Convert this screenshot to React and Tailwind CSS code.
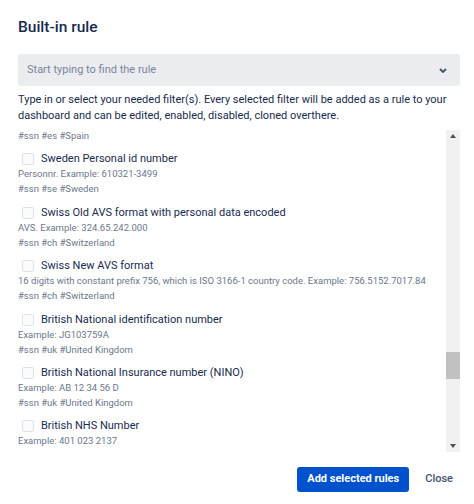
import { useLayoutEffect, useRef } from 'react'

const rules = [
  {
    title: 'Sweden Personal id number',
    desc: 'Personnr. Example: 610321-3499',
    tags: '#ssn #se #Sweden',
  },
  {
    title: 'Swiss Old AVS format with personal data encoded',
    desc: 'AVS. Example: 324.65.242.000',
    tags: '#ssn #ch #Switzerland',
  },
  {
    title: 'Swiss New AVS format',
    desc: '16 digits with constant prefix 756, which is ISO 3166-1 country code. Example: 756.5152.7017.84',
    tags: '#ssn #ch #Switzerland',
  },
  {
    title: 'British National identification number',
    desc: 'Example: JG103759A',
    tags: '#ssn #uk #United Kingdom',
  },
  {
    title: 'British National Insurance number (NINO)',
    desc: 'Example: AB 12 34 56 D',
    tags: '#ssn #uk #United Kingdom',
  },
  {
    title: 'British NHS Number',
    desc: 'Example: 401 023 2137',
    tags: '#ssn #uk #United Kingdom',
  },
]

function RuleItem({ rule }) {
  return (
    <div className="flex flex-col">
      <label className="flex items-center h-[16px] pt-[2px] pl-1">
        <span className="w-[12px] h-[12px] rounded-[2px] border border-[#dfe1e6] bg-[#fafbfc] shrink-0" />
        <span className="ml-[7px] text-[11px] leading-[14px] text-[#172b4d]">{rule.title}</span>
      </label>
      <div className="text-[9.5px] leading-[15px] text-[#6b778c] whitespace-nowrap">{rule.desc}</div>
      <div className="text-[9.5px] leading-[15px] text-[#6b778c]">{rule.tags}</div>
    </div>
  )
}

function Scrollbar() {
  return (
    <div className="w-[14px] bg-[#f1f1f1] flex flex-col items-center shrink-0">
      <div className="h-[12px] flex items-center justify-center">
        <svg width="6" height="4" viewBox="0 0 6 4"><path d="M0 4 L3 0 L6 4 Z" fill="#505050" /></svg>
      </div>
      <div className="h-[210px]" />
      <div className="w-full h-[27px] bg-[#c1c1c1]" />
      <div className="flex-1" />
      <div className="h-[12px] flex items-center justify-center">
        <svg width="6" height="4" viewBox="0 0 6 4"><path d="M0 0 L6 0 L3 4 Z" fill="#505050" /></svg>
      </div>
    </div>
  )
}

export default function App() {
  const listRef = useRef(null)

  // list is scrolled part-way: the tail of the Spain entry peeks in at the top
  useLayoutEffect(() => {
    if (listRef.current) listRef.current.scrollTop = 5
  }, [])

  return (
    <div className="w-[474px] h-[504px] bg-white pl-[18px] pr-[14px] pt-[17px] font-['Roboto',sans-serif] text-[#172b4d]">
      <h1 className="text-[15.5px] leading-[20px] font-medium">Built-in rule</h1>

      <div className="mt-[17px] h-[32px] bg-[#ebecf0] rounded-[3px] flex items-center justify-between pl-[9px] pr-[13px]">
        <span className="text-[11px] text-[#7a869a]">Start typing to find the rule</span>
        <svg width="8" height="5" viewBox="0 0 8 5">
          <path d="M1 1 L4 4 L7 1" stroke="#42526e" strokeWidth="1.8" fill="none" />
        </svg>
      </div>

      <p className="mt-[6px] text-[11px] leading-[16px] pr-[4px]">
        Type in or select your needed filter(s). Every selected filter will be added as a rule to your dashboard and can be edited, enabled, disabled, cloned overthere.
      </p>

      <div className="mt-[6px] h-[322px] flex">
        <div ref={listRef} className="flex-1 overflow-hidden flex flex-col gap-[7.4px]">
          <div className="pt-[3px] text-[9.5px] leading-[15px] text-[#6b778c]">#ssn #es #Spain</div>
          {rules.map((r) => (
            <RuleItem key={r.title} rule={r} />
          ))}
        </div>
        <Scrollbar />
      </div>

      <div className="mt-[15px] flex items-center justify-end gap-[16px] pr-[7px]">
        <button className="h-[25px] w-[112px] rounded-[3px] bg-[#0052cc] text-white text-[11px] font-bold">
          Add selected rules
        </button>
        <button className="text-[11px] font-medium text-[#42526e]">Close</button>
      </div>
    </div>
  )
}
